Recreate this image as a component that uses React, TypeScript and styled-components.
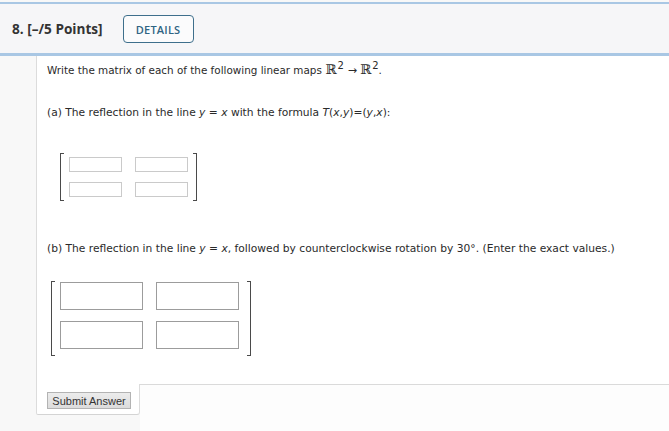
import React from "react";
import styled, { createGlobalStyle } from "styled-components";

const Global = createGlobalStyle`
  html, body { margin: 0; padding: 0; }
  body { background: #f8f8f8; font-family: "DejaVu Sans", Verdana, sans-serif; }
`;

const Page = styled.div`
  width: 669px;
  height: 431px;
  overflow: hidden;
  background: #f8f8f8;
  padding-top: 2px;
  box-sizing: border-box;
`;

const Header = styled.header`
  height: 49px;
  border-top: 2px solid #a9c7e4;
  border-bottom: 3px solid #a9c7e4;
  background: #f6f6f8;
  display: flex;
  align-items: center;
  gap: 20px;
  padding-left: 12px;
`;

const Title = styled.span`
  font-family: "Open Sans", sans-serif;
  font-weight: 700;
  font-size: 13.6px;
  color: #333;
`;

const DetailsButton = styled.button`
  height: 28px;
  width: 71px;
  box-sizing: border-box;
  border: 1px solid #3e6f8c;
  border-radius: 4px;
  background: #fbfbfc;
  color: #2f6483;
  font-family: "Open Sans", sans-serif;
  font-weight: 600;
  font-size: 11px;
  letter-spacing: 0.2px;
  padding: 0;
  margin-top: 1px;
`;

const Body = styled.div`
  margin-left: 36px;
`;

const Panel = styled.section`
  background: #fff;
  border-left: 1px solid #dcdcdc;
  height: 328px;
  box-sizing: border-box;
  padding: 6px 0 0 10px;
  color: #2a2a2a;
`;

const Line = styled.p<{ $top: number; $size: number }>`
  margin: ${(p) => p.$top}px 0 0 0;
  font-size: ${(p) => p.$size}px;
  line-height: 15px;
  white-space: nowrap;
`;

const Real = styled.span`
  font-family: "DejaVu Serif", "Liberation Serif", serif;
  font-size: 13.5px;
`;

const Sup = styled.sup`
  font-family: "DejaVu Sans", sans-serif;
  font-size: 10px;
  vertical-align: 5px;
  line-height: 0;
  margin-left: 1px;
`;

const Arrow = styled.span`
  font-size: 11px;
  margin: 0 3px 0 4px;
`;

const Var = styled.i`
  font-style: italic;
`;

const Matrix = styled.div<{ $left: number; $top: number }>`
  display: inline-flex;
  align-items: stretch;
  margin: ${(p) => p.$top}px 0 0 ${(p) => p.$left}px;
`;

const Bracket = styled.div<{ $side: "left" | "right"; $gap: number }>`
  width: 3px;
  border: 1.5px solid #4a4a4a;
  border-${(p) => (p.$side === "left" ? "right" : "left")}: none;
  margin-${(p) => (p.$side === "left" ? "right" : "left")}: ${(p) => p.$gap}px;
`;

const Grid = styled.div<{ $w: number; $h: number; $cg: number; $rg: number; $pt: number; $pb: number }>`
  display: grid;
  grid-template-columns: ${(p) => p.$w}px ${(p) => p.$w}px;
  grid-auto-rows: ${(p) => p.$h}px;
  column-gap: ${(p) => p.$cg}px;
  row-gap: ${(p) => p.$rg}px;
  padding: ${(p) => p.$pt}px 0 ${(p) => p.$pb}px 0;
`;

const Cell = styled.input<{ $dark?: boolean }>`
  box-sizing: border-box;
  width: 100%;
  height: 100%;
  margin: 0;
  padding: 0;
  border: 1px solid ${(p) => (p.$dark ? "#9c9c9c" : "#cacaca")};
  background: #fff;
  outline: none;
`;

const Footer = styled.div`
  display: flex;
  align-items: flex-start;
`;

const SubmitTab = styled.div`
  width: 104px;
  height: 31px;
  box-sizing: border-box;
  background: #fff;
  border-left: 1px solid #dcdcdc;
  border-right: 1px solid #dcdcdc;
  border-bottom: 1px solid #d4d4d4;
  border-bottom-right-radius: 3px;
  border-bottom-left-radius: 2px;
  padding: 8px 0 0 10px;
`;

const Filler = styled.div`
  flex: 1;
  height: 47px;
  border-top: 1px solid #dadada;
  background: #fdfdfd;
`;

const SubmitButton = styled.button`
  display: block;
  width: 84px;
  height: 17px;
  box-sizing: border-box;
  padding: 0;
  border: 1px solid #b3b3b3;
  background: linear-gradient(#ececec, #dcdcdc);
  font-family: "Liberation Sans", Arial, sans-serif;
  font-size: 11px;
  color: #333;
`;

export default function App() {
  return (
    <Page>
      <Global />
      <Header>
        <Title>8. [–/5 Points]</Title>
        <DetailsButton>DETAILS</DetailsButton>
      </Header>
      <Body>
        <Panel>
          <Line $top={0} $size={10.4}>
            Write the matrix of each of the following linear maps{" "}
            <Real>
              ℝ<Sup>2</Sup>
            </Real>
            <Arrow>→</Arrow>
            <Real>
              ℝ<Sup>2</Sup>
            </Real>
            .
          </Line>
          <Line $top={27} $size={10.7}>
            (a) The reflection in the line <Var>y</Var> = <Var>x</Var> with the formula{" "}
            <Var>T</Var>(<Var>x</Var>,<Var>y</Var>)=(<Var>y</Var>,<Var>x</Var>):
          </Line>
          <Matrix $left={13} $top={33}>
            <Bracket $side="left" $gap={5} />
            <Grid $w={53} $h={15} $cg={13} $rg={10} $pt={4} $pb={4}>
              <Cell />
              <Cell />
              <Cell />
              <Cell />
            </Grid>
            <Bracket $side="right" $gap={5} />
          </Matrix>
          <Line $top={36} $size={10.7}>
            (b) The reflection in the line <Var>y</Var> = <Var>x</Var>, followed by counterclockwise
            rotation by 30°. (Enter the exact values.)
          </Line>
          <Matrix $left={4} $top={25}>
            <Bracket $side="left" $gap={5} />
            <Grid $w={83} $h={28} $cg={13} $rg={11} $pt={1} $pb={7}>
              <Cell $dark />
              <Cell $dark />
              <Cell $dark />
              <Cell $dark />
            </Grid>
            <Bracket $side="right" $gap={8} />
          </Matrix>
        </Panel>
        <Footer>
          <SubmitTab>
            <SubmitButton>Submit Answer</SubmitButton>
          </SubmitTab>
          <Filler />
        </Footer>
      </Body>
    </Page>
  );
}
